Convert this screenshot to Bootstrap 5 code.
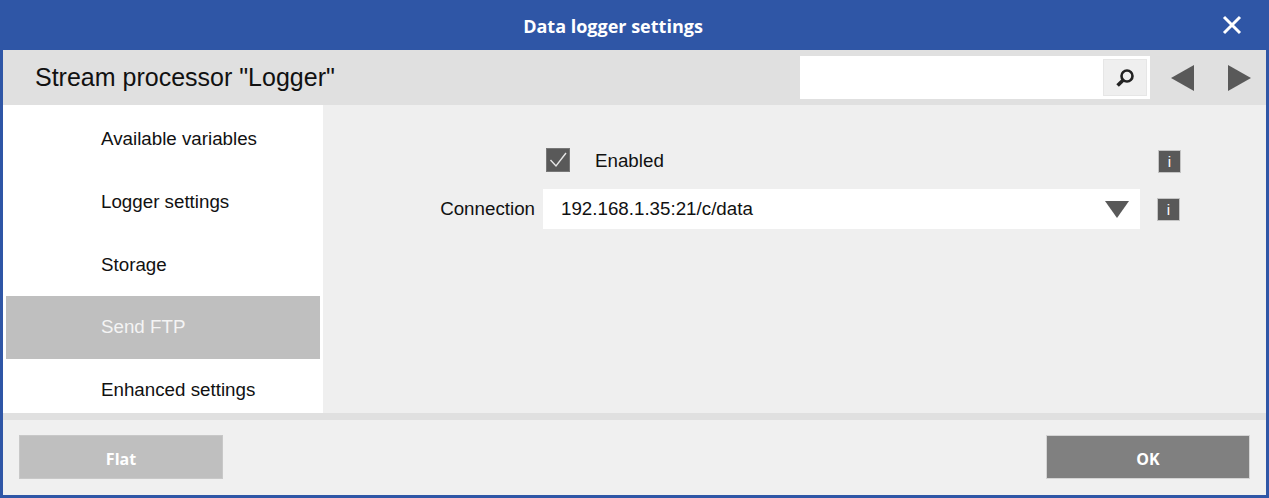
<!DOCTYPE html>
<html lang="en">
<head>
    <meta charset="UTF-8">
    <title>Data logger settings</title>
    <link rel="stylesheet" href="https://cdn.jsdelivr.net/npm/bootstrap@5.3.0/dist/css/bootstrap.min.css">
    <style>
        html, body { height: 498px; overflow: hidden; }
        body { background: #2f56a6; font-family: "Liberation Sans", Arial, sans-serif; color: #111; }
        .dlg-window { height: 498px; padding: 0 3px 3px; }
        .dlg-title { height: 50px; margin: 0 -3px; padding: 2px 43px 0 0; color: #fff; position: relative; }
        .dlg-title-text { font: 700 18px "Open Sans", sans-serif; }
        .dlg-close { position: absolute; right: 27px; top: 15px; line-height: 0; }
        .dlg-head { height: 55px; background: #e0e0e0; padding-left: 32px; padding-right: 15px; }
        .dlg-head-text { font-size: 25px; }
        .dlg-search { width: 350px; height: 43px; background: #fff; padding: 3px; margin-right: 21px; }
        .dlg-search-btn { width: 44px; height: 37px; background: #efefef; border: 1px solid #e6e6e6; }
        .dlg-arrow-next { margin-left: 32px; }
        .dlg-body { height: 308px; overflow: hidden; }
        .dlg-side { width: 320px; background: #fff; padding: 3px; }
        .dlg-side-item { height: 62.7px; flex-shrink: 0; padding-left: 95px; font-size: 18.75px; color: #111; }
        .dlg-side-item.is-active { background: #bfbfbf; color: #f4f4f4; }
        .dlg-main { background: #efefef; }
        .dlg-row-a { padding-top: 43px; height: 84px; }
        .dlg-row-b { height: 40px; }
        .dlg-check { width: 24px; height: 24px; background: #595959; margin-left: 223px; border: 1px solid #777; }
        .dlg-check-label { font-size: 18.75px; margin-left: 25px; width: 563px; line-height: 24px; padding-top: 1px; }
        .dlg-label { width: 220px; padding: 1px 8px 0 0; text-align: right; font-size: 18.75px; }
        .dlg-select { width: 597px; height: 40px; background: #fff; padding: 1px 11px 0 18px; font-size: 18.75px; }
        .dlg-info { width: 23px; height: 23px; background: #595959; border: 1px solid #c4c4c4; color: #fff; font-size: 15px; line-height: 21px; text-align: center; }
        .dlg-row-a .dlg-info { margin-top: 2px; }
        .dlg-row-b .dlg-info { margin-left: 17px; }
        .dlg-foot-line { height: 7px; background: #e0e0e0; }
        .dlg-foot { height: 75px; background: #f0f0f0; padding: 15px 16px 16px; }
        .dlg-btn { width: 204px; height: 44px; border-radius: 0; border: 1px solid #d4d4d4; color: #fff; font: 700 16px "Open Sans", sans-serif; padding: 3px 0 0; }
        .dlg-btn-flat, .dlg-btn-flat:hover { background: #bfbfbf; border-color: #c8c8c8; color: #fff; }
        .dlg-btn-ok, .dlg-btn-ok:hover { background: #808080; color: #fff; }
    </style>
</head>
<body>
<div class="dlg-window d-flex flex-column">
    <div class="dlg-title d-flex align-items-center justify-content-center">
        <span class="dlg-title-text">Data logger settings</span>
        <span class="dlg-close">
            <svg width="20" height="20" viewBox="0 0 20 20"><path d="M2 2 L18 18 M18 2 L2 18" stroke="#fff" stroke-width="3"/></svg>
        </span>
    </div>
    <div class="dlg-head d-flex align-items-center">
        <div class="dlg-head-text flex-grow-1">Stream processor "Logger"</div>
        <div class="dlg-search d-flex justify-content-end">
            <div class="dlg-search-btn d-flex align-items-center justify-content-center">
                <svg width="20" height="20" viewBox="0 0 20 20"><circle cx="12" cy="8" r="5.5" fill="none" stroke="#222" stroke-width="2.6"/><path d="M8 12.2 L2.6 17.6" stroke="#222" stroke-width="3.6"/></svg>
            </div>
        </div>
        <svg width="24" height="28" viewBox="0 0 24 28"><path d="M0 14 L23 1 V27 Z" fill="#595959"/></svg>
        <svg class="dlg-arrow-next" width="24" height="28" viewBox="0 0 24 28"><path d="M24 14 L1 1 V27 Z" fill="#595959"/></svg>
    </div>
    <div class="dlg-body d-flex">
        <div class="dlg-side d-flex flex-column">
            <div class="dlg-side-item d-flex align-items-center">Available variables</div>
            <div class="dlg-side-item d-flex align-items-center">Logger settings</div>
            <div class="dlg-side-item d-flex align-items-center">Storage</div>
            <div class="dlg-side-item is-active d-flex align-items-center">Send FTP</div>
            <div class="dlg-side-item d-flex align-items-center">Enhanced settings</div>
        </div>
        <div class="dlg-main flex-grow-1">
            <div class="dlg-row-a d-flex align-items-start">
                <div class="dlg-check d-flex align-items-center justify-content-center">
                    <svg width="20" height="20" viewBox="0 0 20 20"><path d="M2.5 10 L8 16 L18 3" fill="none" stroke="#e6e6e6" stroke-width="1.4"/></svg>
                </div>
                <div class="dlg-check-label">Enabled</div>
                <div class="dlg-info">i</div>
            </div>
            <div class="dlg-row-b d-flex align-items-center">
                <div class="dlg-label">Connection</div>
                <div class="dlg-select d-flex align-items-center justify-content-between">
                    <span>192.168.1.35:21/c/data</span>
                    <svg width="24" height="17" viewBox="0 0 24 17"><path d="M0 0 H24 L12 17 Z" fill="#595959"/></svg>
                </div>
                <div class="dlg-info">i</div>
            </div>
        </div>
    </div>
    <div class="dlg-foot-line"></div>
    <div class="dlg-foot d-flex justify-content-between">
        <button type="button" class="btn dlg-btn dlg-btn-flat">Flat</button>
        <button type="button" class="btn dlg-btn dlg-btn-ok">OK</button>
    </div>
</div>
<script src="https://cdn.jsdelivr.net/npm/bootstrap@5.3.0/dist/js/bootstrap.bundle.min.js"></script>
</body>
</html>
